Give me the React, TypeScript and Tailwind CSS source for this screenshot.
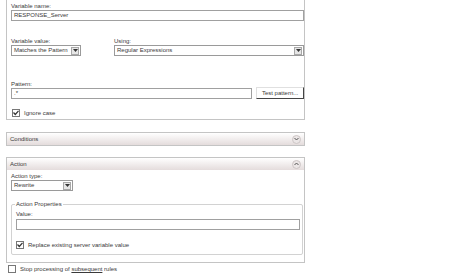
import React from 'react';

const font = { fontFamily: '"Liberation Sans", Arial, sans-serif' };

const Label: React.FC<{ children: React.ReactNode; className?: string }> = ({ children, className }) => (
  <div className={`h-[8px] text-[6px] leading-[8px] text-[#3a3a3a] ${className ?? ''}`}>{children}</div>
);

const Select: React.FC<{ value: string; className?: string }> = ({ value, className }) => (
  <div className={`h-[11px] flex items-center border border-[#9a9a9a] bg-white ${className ?? ''}`}>
    <span className="flex-1 pl-[2px] text-[6px] leading-[9px] text-[#3a3a3a] whitespace-nowrap overflow-hidden">{value}</span>
    <span className="w-[8px] h-[8px] mr-[1px] flex items-center justify-center border border-[#a8a8a8] bg-[#e6e6e6]">
      <svg width="5" height="3" viewBox="0 0 5 3">
        <path d="M0 0H5L2.5 3Z" fill="#333" />
      </svg>
    </span>
  </div>
);

const Check: React.FC<{ checked?: boolean }> = ({ checked }) => (
  <span className="w-[8px] h-[8px] flex items-center justify-center border border-[#777] bg-white">
    {checked && (
      <svg width="6" height="6" viewBox="0 0 6 6">
        <path d="M0.5 2.5L2.3 4.5L5.5 0.8" stroke="#333" strokeWidth="1.2" fill="none" />
      </svg>
    )}
  </span>
);

const Chevron: React.FC<{ up?: boolean }> = ({ up }) => (
  <span className="w-[9px] h-[9px] rounded-full bg-[#ebe6e6] border border-[#cdc6c6] flex items-center justify-center">
    <svg width="5" height="4" viewBox="0 0 5 4">
      <path d={up ? 'M0.5 3L2.5 1L4.5 3' : 'M0.5 1L2.5 3L4.5 1'} stroke="#555" strokeWidth="1" fill="none" />
    </svg>
  </span>
);

const HeaderBar: React.FC<{ title: string; up?: boolean }> = ({ title, up }) => (
  <div className="h-[12px] flex items-center justify-between pl-[3px] pr-[3px] bg-gradient-to-b from-[#ffffff] to-[#e4dcdc]">
    <span className="text-[6px] leading-[8px] text-[#3a3a3a]">{title}</span>
    <Chevron up={up} />
  </div>
);

export default function App() {
  return (
    <div className="w-[474px] h-[274px] overflow-hidden bg-white" style={font}>
      {/* rule conditions panel (top cut off) */}
      <div className="ml-[6px] w-[299px] h-[120px] border-x border-b border-[#c4c4c4] pl-[4px] pt-[2px]">
        <Label>Variable name:</Label>
        <div className="w-[293px] h-[11px] border border-[#a0a0a0] bg-white pl-[2px] text-[6px] leading-[9px] text-[#3a3a3a]">
          RESPONSE_Server
        </div>

        <div className="mt-[16px] flex gap-[33px]">
          <div>
            <Label>Variable value:</Label>
            <Select value="Matches the Pattern" className="w-[70px]" />
          </div>
          <div>
            <Label>Using:</Label>
            <Select value="Regular Expressions" className="w-[190px]" />
          </div>
        </div>

        <Label className="mt-[24px]">Pattern:</Label>
        <div className="flex items-center gap-[4px] -mt-[1px]">
          <div className="w-[242px] h-[11px] border border-[#a0a0a0] bg-white pl-[2px] text-[6px] leading-[9px] text-[#3a3a3a]">
            .*
          </div>
          <div className="w-[48px] h-[12px] flex items-center justify-center border border-[#e0e0e0] border-r-[#444] border-b-[#444] bg-white text-[6px] text-[#3a3a3a]">
            Test pattern...
          </div>
        </div>

        <div className="mt-[10px] flex items-center gap-[4px] pl-[1px]">
          <Check checked />
          <span className="text-[6px] leading-[8px] text-[#3a3a3a]">Ignore case</span>
        </div>
      </div>

      {/* conditions */}
      <div className="mt-[12px] ml-[6px] w-[299px] border border-[#c4c4c4]">
        <HeaderBar title="Conditions" />
      </div>

      {/* action */}
      <div className="mt-[11px] ml-[6px] w-[299px] h-[106px] border border-[#c4c4c4]">
        <HeaderBar title="Action" up />
        <div className="pl-[4px] pr-[3px]">
          <Label className="mt-[2px]">Action type:</Label>
          <Select value="Rewrite" className="w-[62px]" />

          <div className="relative mt-[13px] w-[292px] h-[51px] border border-[#d2d2d2] rounded-[2px] px-[4px] pt-[5px]">
            <span className="absolute -top-[5px] left-[3px] px-[1px] bg-white text-[6px] leading-[8px] text-[#3a3a3a]">
              Action Properties
            </span>
            <Label>Value:</Label>
            <div className="mt-[1px] w-[284px] h-[11px] border border-[#a0a0a0] bg-white" />
            <div className="mt-[11px] flex items-center gap-[4px]">
              <Check checked />
              <span className="text-[6px] leading-[8px] text-[#3a3a3a]">Replace existing server variable value</span>
            </div>
          </div>
        </div>
      </div>

      <div className="mt-[2px] ml-[8px] flex items-center gap-[4px]">
        <Check />
        <span className="text-[6px] leading-[8px] text-[#3a3a3a]">
          Stop processing of <span className="underline">subsequent</span> rules
        </span>
      </div>
    </div>
  );
}
